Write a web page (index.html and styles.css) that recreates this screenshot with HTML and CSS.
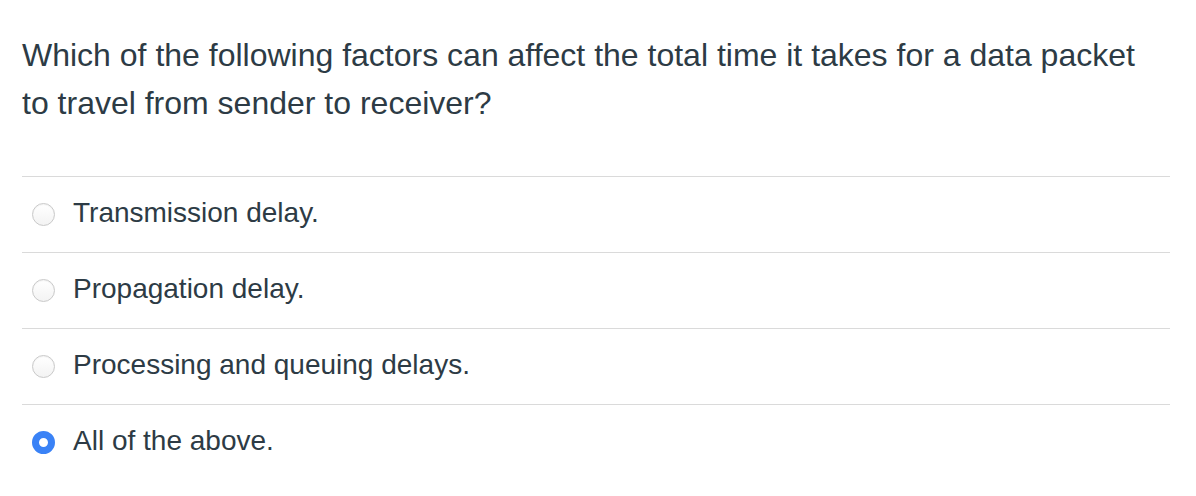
FILE: index.html
```html
<!DOCTYPE html>
<html>
<head>
<meta charset="utf-8">
<link rel="stylesheet" href="styles.css">
</head>
<body>
<div class="quiz">
  <div class="question">Which of the following factors can affect the total time it takes for a data packet to travel from sender to receiver?</div>
  <div class="answers">
    <label class="answer"><span class="radio"></span><span class="text">Transmission delay.</span></label>
    <label class="answer"><span class="radio"></span><span class="text">Propagation delay.</span></label>
    <label class="answer"><span class="radio"></span><span class="text">Processing and queuing delays.</span></label>
    <label class="answer"><span class="radio checked"></span><span class="text">All of the above.</span></label>
  </div>
</div>
</body>
</html>
```
FILE: styles.css
```css
html, body {
  margin: 0;
  padding: 0;
  background: #ffffff;
}
body {
  font-family: "Liberation Sans", Arial, Helvetica, sans-serif;
  color: #2d3b45;
}
.quiz {
  padding: 31px 26px 0 22px;
}
.question {
  font-size: 32px;
  line-height: 48px;
  max-width: 1140px;
}
.answers {
  margin-top: 49px;
}
.answer {
  display: flex;
  align-items: center;
  height: 75px;
  border-top: 1px solid #dadada;
  padding-left: 10px;
}
.radio {
  box-sizing: border-box;
  width: 23px;
  height: 23px;
  border-radius: 50%;
  border: 1px solid #c9c9c9;
  background: linear-gradient(#ffffff, #f3f3f3);
  box-shadow: inset 0 1px 1px rgba(0,0,0,0.05);
  margin-right: 18px;
  flex: none;
}
.radio.checked {
  border: 7.5px solid #3a82f6;
  background: #ffffff;
  box-shadow: none;
}
.text {
  font-size: 28px;
  padding-bottom: 4px;
}
```
